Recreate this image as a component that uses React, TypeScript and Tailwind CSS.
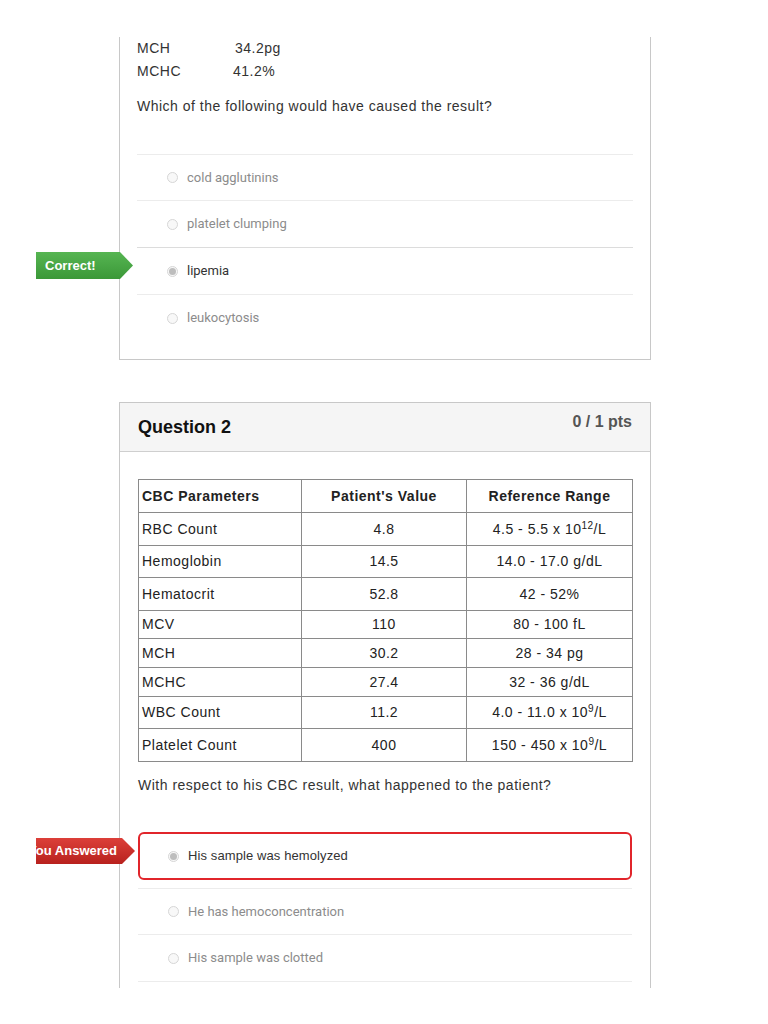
import React from "react";

function Radio({ checked = false }: { checked?: boolean }) {
  return (
    <span className="flex h-[11px] w-[11px] shrink-0 items-center justify-center rounded-full border border-[#d6d6d6] bg-[#f8f8f8]">
      {checked && <span className="h-[7px] w-[7px] rounded-full bg-[#bdbdbd]" />}
    </span>
  );
}

function Option({ text, checked = false, dark = false, short = false }: { text: string; checked?: boolean; dark?: boolean; short?: boolean }) {
  return (
    <div className={`flex ${short ? "h-[46px]" : "h-[47px]"} items-center border-t ${dark ? "border-[#dcdcdc]" : "border-[#ececec]"} pl-[30px]`}>
      <Radio checked={checked} />
      <span className={`ml-[9px] font-['Roboto',sans-serif] text-[13px] ${dark ? "text-[#333]" : "text-[#8c8c8c]"}`}>{text}</span>
    </div>
  );
}

const rows: { p: string; v: string; r: React.ReactNode; h: string }[] = [
  { p: "RBC Count", v: "4.8", r: <>4.5 - 5.5 x 10<sup className="text-[10px]">12</sup>/L</>, h: "h-[33px]" },
  { p: "Hemoglobin", v: "14.5", r: "14.0 - 17.0 g/dL", h: "h-[32px]" },
  { p: "Hematocrit", v: "52.8", r: "42 - 52%", h: "h-[33px]" },
  { p: "MCV", v: "110", r: "80 - 100 fL", h: "h-[28px]" },
  { p: "MCH", v: "30.2", r: "28 - 34 pg", h: "h-[29px]" },
  { p: "MCHC", v: "27.4", r: "32 - 36 g/dL", h: "h-[29px]" },
  { p: "WBC Count", v: "11.2", r: <>4.0 - 11.0 x 10<sup className="text-[10px]">9</sup>/L</>, h: "h-[32px]" },
  { p: "Platelet Count", v: "400", r: <>150 - 450 x 10<sup className="text-[10px]">9</sup>/L</>, h: "h-[33px]" },
];

export default function App() {
  return (
    <div className="h-[1024px] w-[768px] overflow-hidden bg-white font-['Liberation_Sans',Arial,sans-serif] text-[#333]">
      {/* Card 1 */}
      <div className="ml-[119px] mt-[37px] w-[532px] border-x border-b border-[#c8c8c8] pb-[18px] pl-[17px] pr-[17px]">
        <div className="text-[14px] leading-[23px] tracking-[0.5px]">
          <div className="flex">
            <span className="w-[98px]">MCH</span>
            <span>34.2pg</span>
          </div>
          <div className="flex">
            <span className="w-[96px]">MCHC</span>
            <span>41.2%</span>
          </div>
        </div>
        <p className="mt-[13px] text-[14px] leading-[20px] tracking-[0.5px]">Which of the following would have caused the result?</p>
        <div className="mt-[38px]">
          <Option text="cold agglutinins" short />
          <Option text="platelet clumping" />
          <div className="relative">
            <div className="absolute left-[-101px] top-[5px] flex h-[27px] w-[97px] items-center bg-gradient-to-b from-[#56b552] to-[#3b9838] pl-[9px] text-[13px] font-bold text-white [clip-path:polygon(0_0,84px_0,97px_50%,84px_100%,0_100%)]">
              Correct!
            </div>
            <Option text="lipemia" checked dark />
          </div>
          <Option text="leukocytosis" />
        </div>
      </div>

      {/* Card 2 */}
      <div className="ml-[119px] mt-[42px] h-[586px] w-[532px] border-x border-t border-[#c8c8c8]">
        <div className="flex h-[49px] justify-between border-b border-[#cfcfcf] bg-[#f5f5f5] px-[18px]">
          <h2 className="mt-[13px] text-[18px] font-bold leading-[22px] text-[#111]">Question 2</h2>
          <span className="mt-[9px] text-[16px] font-bold leading-[20px] text-[#555]">0 / 1 pts</span>
        </div>
        <div className="px-[18px] pt-[27px]">
          <table className="w-[494px] table-fixed border-collapse border border-[#6e6e6e] text-[14px] tracking-[0.5px] text-[#222]">
            <colgroup>
              <col className="w-[163px]" />
              <col className="w-[165px]" />
              <col className="w-[166px]" />
            </colgroup>
            <tbody>
              <tr className="h-[33px] font-bold">
                <td className="border border-[#8a8a8a] pl-[3px]">CBC Parameters</td>
                <td className="border border-[#8a8a8a] text-center">Patient's Value</td>
                <td className="border border-[#8a8a8a] text-center">Reference Range</td>
              </tr>
              {rows.map((r) => (
                <tr key={r.p} className={r.h}>
                  <td className="border border-[#8a8a8a] pl-[3px]">{r.p}</td>
                  <td className="border border-[#8a8a8a] text-center">{r.v}</td>
                  <td className="border border-[#8a8a8a] text-center">{r.r}</td>
                </tr>
              ))}
            </tbody>
          </table>
          <p className="mt-[13px] text-[14px] leading-[20px] tracking-[0.5px]">With respect to his CBC result, what happened to the patient?</p>
          <div className="relative mt-[37px] flex h-[48px] items-center rounded-[6px] border-2 border-[#e1252b] pl-[28px]">
            <div className="absolute left-[-104px] top-[4px] flex h-[26px] w-[99px] items-center justify-end overflow-hidden whitespace-nowrap bg-gradient-to-b from-[#dc3f39] to-[#b8211d] pr-[18px] text-[13px] font-bold text-white [clip-path:polygon(0_0,86px_0,99px_50%,86px_100%,0_100%)]">
              You Answered
            </div>
            <Radio checked />
            <span className="ml-[9px] text-[13px] tracking-[0.1px] text-[#333]">His sample was hemolyzed</span>
          </div>
          <div className="mt-[8px]">
            <Option text="He has hemoconcentration" short />
            <Option text="His sample was clotted" />
            <div className="border-t border-[#ececec]" />
          </div>
        </div>
      </div>
    </div>
  );
}
